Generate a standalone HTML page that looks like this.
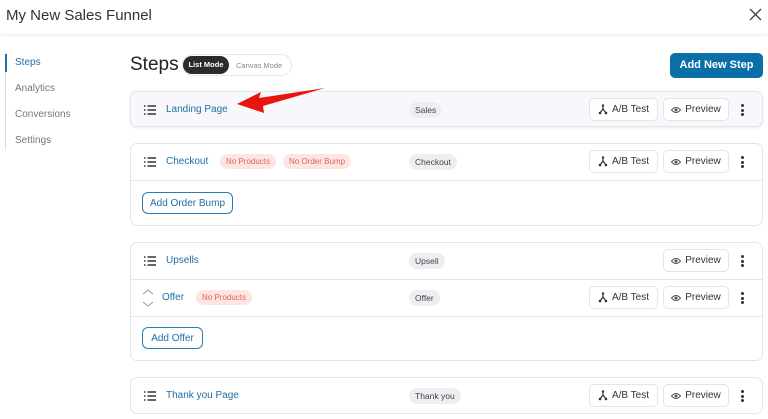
<!DOCTYPE html><html><head><style>
*{box-sizing:border-box;margin:0;padding:0}
body{width:768px;height:419px;overflow:hidden;background:#fff;font-family:"Liberation Sans",sans-serif;position:relative;color:#333}
.a{position:absolute}
.hdr{left:0;top:0;width:768px;height:34px;box-shadow:0 2px 3px rgba(0,0,0,.06)}
.t{left:6px;top:7px;font-size:15px;color:#333}
.side{left:5px;top:52px;height:98px;border-left:1px solid #ddd}
.si{left:15px;font-size:10px;color:#777}
.card{left:130px;width:633px;border:1px solid #e3e5ea;border-radius:7px;background:#fff}
.row{position:absolute;left:0;width:100%;height:36px}
.ic{position:absolute;left:13px;top:13px;width:12px;height:10px}
.nm{position:absolute;left:35px;top:12px;font-size:10px;color:#1f6fa5}
.bd{position:absolute;top:10px;font-size:8px;padding:3px 6px;border-radius:8px;background:#fde5e3;color:#e06357}
.ty{position:absolute;left:278px;top:10px;font-size:8.5px;padding:3px 6px;border-radius:8px;background:#eceef1;color:#444}
.btn{position:absolute;top:6px;height:23px;border:1px solid #e2e4e8;border-radius:5px;font-size:10px;color:#333;display:flex;align-items:center;justify-content:center;gap:4px;background:#fff}
.ab{left:458px;width:69px}.pv{left:532px;width:66px}
.dots{position:absolute;left:610px;top:12px;width:3px}
.dots i{display:block;width:3px;height:3px;background:#333;border-radius:50%;margin-bottom:1.5px}
.div{position:absolute;left:0;width:100%;border-top:1px solid #e3e5ea}
.ob{position:absolute;left:11px;height:22px;border:1px solid #2a7db1;border-radius:6px;font-size:10px;color:#1f6fa5;display:flex;align-items:center;justify-content:center}
</style></head><body>
<div class="a hdr"></div>
<div class="a t">My New Sales Funnel</div>
<svg class="a" style="left:749px;top:8px" width="13" height="13"><path d="M1 1L12 12M12 1L1 12" stroke="#444" stroke-width="1.3"/></svg>
<div class="a side"></div>
<div class="a" style="left:5px;top:54px;width:2px;height:18px;background:#1f6fa5"></div>
<div class="a si" style="top:57px;color:#1f6fa5">Steps</div>
<div class="a si" style="top:83px">Analytics</div>
<div class="a si" style="top:109px">Conversions</div>
<div class="a si" style="top:135px">Settings</div>
<div class="a" style="left:130px;top:54px;font-size:19px;color:#222">Steps</div>
<div class="a" style="left:182px;top:54px;width:110px;height:22px;border:1px solid #e3e5ea;border-radius:11px"></div>
<div class="a" style="left:183px;top:56px;width:46px;height:18px;background:#2b2b2b;border-radius:9px;color:#fff;font-size:7.5px;font-weight:bold;text-align:center;line-height:18px">List Mode</div>
<div class="a" style="left:236px;top:61px;font-size:7.5px;color:#888">Canvas Mode</div>
<div class="a" style="left:670px;top:53px;width:93px;height:25px;background:#0a6fa6;border-radius:5px;color:#fff;font-size:11px;font-weight:bold;text-align:center;line-height:25px">Add New Step</div>

<svg width="0" height="0" style="position:absolute"><defs>
<g id="li"><path d="M0 1h1.5M0 5h1.5M0 9h1.5M3.5 1H12M3.5 5H12M3.5 9H12" stroke="#333" stroke-width="1.4"/></g>
<g id="ab"><path d="M5 1v4M5 5L2 9M5 5l3 4" stroke="#333" stroke-width="1.2" fill="none"/><circle cx="2" cy="9" r="1.3" fill="#333"/><circle cx="8" cy="9" r="1.3" fill="#333"/><circle cx="5" cy="1.5" r="1.2" fill="#333"/></g>
<g id="ey"><path d="M0.5 4Q5 -1 9.5 4Q5 9 0.5 4Z" stroke="#555" fill="none"/><circle cx="5" cy="4" r="1.5" fill="#555"/></g>
</defs></svg>

<!-- card1 -->
<div class="a card" style="top:91px;height:36px;background:#f8f8fc;box-shadow:0 1px 3px rgba(0,0,0,.08)">
<div class="row" style="top:0"><svg class="ic"><use href="#li"/></svg><div class="nm">Landing Page</div><div class="ty">Sales</div>
<div class="btn ab" style="top:6px"><svg width="10" height="11"><use href="#ab"/></svg>A/B Test</div><div class="btn pv"><svg width="10" height="8"><use href="#ey"/></svg>Preview</div><div class="dots"><i></i><i></i><i></i></div></div>
</div>
<svg class="a" style="left:230px;top:84px" width="100" height="32"><polygon points="7,20 31,8 29,14 95,4 33,22 34,29" fill="#e8140f"/></svg>

<!-- card2 -->
<div class="a card" style="top:143px;height:83px">
<div class="row" style="top:0"><svg class="ic"><use href="#li"/></svg><div class="nm">Checkout</div><div class="bd" style="left:89px">No Products</div><div class="bd" style="left:152px">No Order Bump</div><div class="ty">Checkout</div>
<div class="btn ab"><svg width="10" height="11"><use href="#ab"/></svg>A/B Test</div><div class="btn pv"><svg width="10" height="8"><use href="#ey"/></svg>Preview</div><div class="dots"><i></i><i></i><i></i></div></div>
<div class="div" style="top:36px"></div>
<div class="ob" style="top:48px;width:91px">Add Order Bump</div>
</div>

<!-- card3 -->
<div class="a card" style="top:242px;height:119px">
<div class="row" style="top:0"><svg class="ic"><use href="#li"/></svg><div class="nm">Upsells</div><div class="ty">Upsell</div>
<div class="btn pv"><svg width="10" height="8"><use href="#ey"/></svg>Preview</div><div class="dots"><i></i><i></i><i></i></div></div>
<div class="div" style="top:36px"></div>
<div class="row" style="top:37px"><svg style="position:absolute;left:11px;top:8px" width="12" height="20"><path d="M1 6L6 2L11 6M1 14L6 18L11 14" stroke="#999" fill="none"/></svg><div class="nm" style="left:31px">Offer</div><div class="bd" style="left:65px">No Products</div><div class="ty">Offer</div>
<div class="btn ab"><svg width="10" height="11"><use href="#ab"/></svg>A/B Test</div><div class="btn pv"><svg width="10" height="8"><use href="#ey"/></svg>Preview</div><div class="dots"><i></i><i></i><i></i></div></div>
<div class="div" style="top:73px"></div>
<div class="ob" style="top:84px;width:61px">Add Offer</div>
</div>

<!-- card4 -->
<div class="a card" style="top:377px;height:37px">
<div class="row" style="top:0"><svg class="ic"><use href="#li"/></svg><div class="nm">Thank you Page</div><div class="ty">Thank you</div>
<div class="btn ab"><svg width="10" height="11"><use href="#ab"/></svg>A/B Test</div><div class="btn pv"><svg width="10" height="8"><use href="#ey"/></svg>Preview</div><div class="dots"><i></i><i></i><i></i></div></div>
</div>
</body></html>
